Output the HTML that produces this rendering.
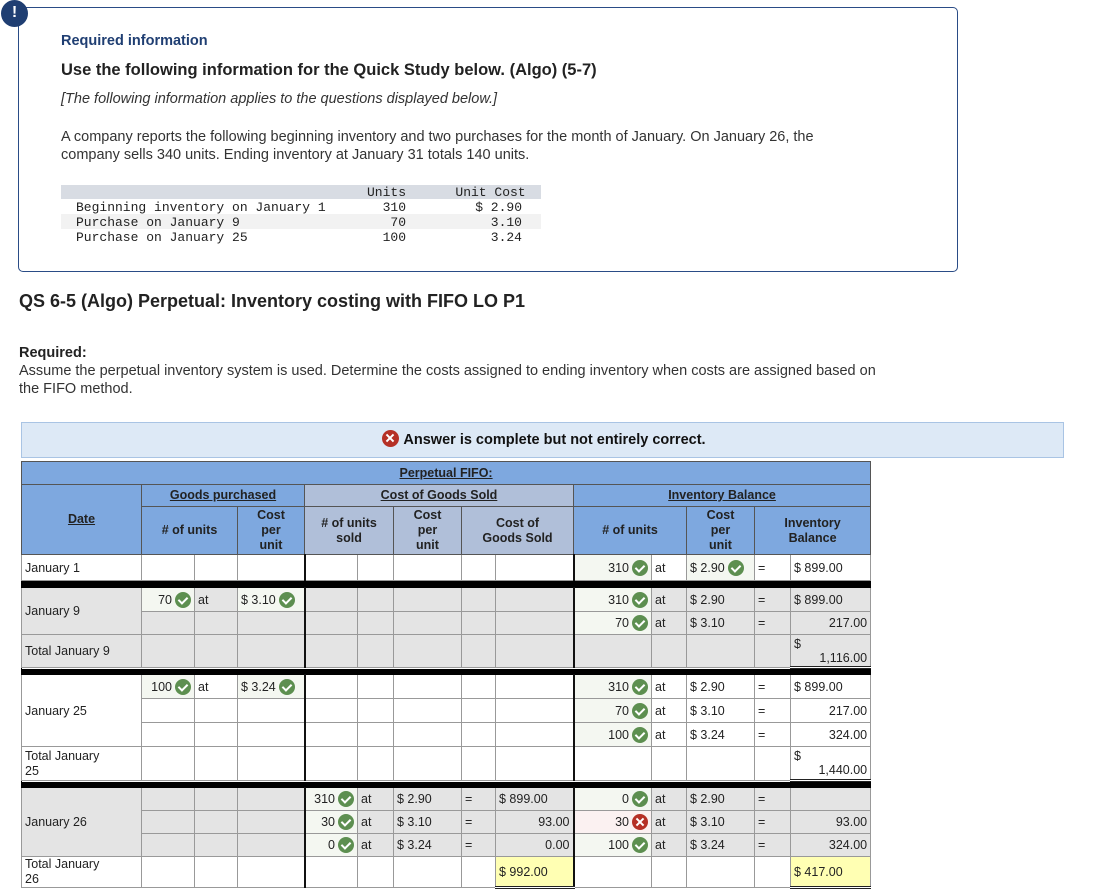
<!DOCTYPE html>
<html><head><meta charset="utf-8">
<style>
*{box-sizing:border-box;margin:0;padding:0}
body{width:1118px;height:890px;background:#fff;font-family:"Liberation Sans",Arial,sans-serif;color:#222;position:relative;overflow:hidden}
.abs{position:absolute}
.box{left:18px;top:7px;width:940px;height:265px;border:1px solid #2a4c86;border-radius:5px}
.excl{left:1px;top:0px;width:27px;height:27px;border-radius:50%;background:#1f3e72;color:#fff;font-weight:bold;font-size:16px;text-align:center;line-height:26px}
.mono{font-family:"Liberation Mono","DejaVu Sans Mono",monospace;font-size:13px;line-height:15px;color:#222;white-space:pre}
table.t{position:absolute;left:21px;top:461px;border-collapse:collapse;table-layout:fixed;width:849px;font-size:12.5px}
table.t td{border:1px solid #999;padding:0 3px;overflow:hidden;white-space:nowrap;vertical-align:middle}
.h1{background:#7ea8df;border-color:#555 !important;font-weight:bold;text-align:center;color:#222;white-space:normal !important;line-height:15px}
.h2{background:#b0bfd9;border-color:#555 !important;font-weight:bold;text-align:center;white-space:normal !important;line-height:15px}
u{text-decoration:underline}
.bar td{background:#000;border-color:#000 !important;height:7px;padding:0}
.g td{background:#e4e4e4}
.in{background:#f4f7f1 !important}
.inr{background:#fbf1f1 !important}
.r{text-align:right}
.y{background:#ffffb3 !important}
.L{border-left:2px solid #111 !important}
.G{border-left:1px solid #333 !important}
.ic{display:inline-block;width:16px;height:16px;border-radius:50%;vertical-align:-4px;margin-left:3px}
.ok{background:#5d8f50}
.no{background:#b53026}
.tw{white-space:normal !important;line-height:15px}
</style></head><body>
<div class="abs box"></div>
<div class="abs excl">!</div>
<div class="abs" style="left:61px;top:33px;font-size:14.5px;font-weight:bold;color:#1f3e72">Required information</div>
<div class="abs" style="left:61px;top:61px;font-size:16.5px;font-weight:bold;color:#222">Use the following information for the Quick Study below. (Algo) (5-7)</div>
<div class="abs" style="left:61px;top:91px;font-size:14.5px;font-style:italic;color:#333">[The following information applies to the questions displayed below.]</div>
<div class="abs" style="left:61px;top:128px;font-size:14.5px;line-height:18px;color:#333;width:805px">A company reports the following beginning inventory and two purchases for the month of January. On January 26, the company sells 340 units. Ending inventory at January 31 totals 140 units.</div>
<div class="abs" style="left:61px;top:185px;width:480px;height:14px;background:#d8dce3"></div>
<div class="abs" style="left:61px;top:214px;width:480px;height:15px;background:#f2f2f2"></div>
<div class="abs mono" style="left:76px;top:200px">Beginning inventory on January 1
Purchase on January 9
Purchase on January 25</div>
<div class="abs mono" style="left:360px;top:185px;width:46px;text-align:right">Units
310
70
100</div>
<div class="abs mono" style="left:440px;top:185px;width:101px;text-align:center">Unit Cost</div>
<div class="abs mono" style="left:440px;top:200px;width:82px;text-align:right">$ 2.90
3.10
3.24</div>

<div class="abs" style="left:19px;top:291px;font-size:18px;font-weight:bold;color:#222">QS 6-5 (Algo) Perpetual: Inventory costing with FIFO LO P1</div>
<div class="abs" style="left:19px;top:345px;font-size:14.5px;font-weight:bold;color:#222">Required:</div>
<div class="abs" style="left:19px;top:362px;font-size:14.5px;line-height:18px;color:#333;width:878px">Assume the perpetual inventory system is used. Determine the costs assigned to ending inventory when costs are assigned based on the FIFO method.</div>

<div class="abs" style="left:21px;top:422px;width:1043px;height:36px;background:#dde9f6;border:1px solid #a9c4e4;text-align:center;font-weight:bold;font-size:14.5px;line-height:34px;color:#111"><span class="ic no" style="width:17px;height:17px;vertical-align:-3px;margin-right:4px"></span>Answer is complete but not entirely correct.</div>

<table class="t">
<colgroup><col style="width:120px"><col style="width:53px"><col style="width:43px"><col style="width:67px"><col style="width:53px"><col style="width:36px"><col style="width:68px"><col style="width:34px"><col style="width:78px"><col style="width:78px"><col style="width:35px"><col style="width:68px"><col style="width:36px"><col style="width:80px"></colgroup>
<tr style="height:23px"><td colspan="14" class="h1"><u>Perpetual FIFO:</u></td></tr>
<tr style="height:22px"><td rowspan="2" class="h1"><u>Date</u></td><td colspan="3" class="h1"><u>Goods purchased</u></td><td colspan="5" class="h2"><u>Cost of Goods Sold</u></td><td colspan="5" class="h1"><u>Inventory Balance</u></td></tr>
<tr style="height:48px"><td colspan="2" class="h1"># of units</td><td class="h1">Cost<br>per<br>unit</td><td colspan="2" class="h2"># of units<br>sold</td><td class="h2">Cost<br>per<br>unit</td><td colspan="2" class="h2">Cost of<br>Goods Sold</td><td colspan="2" class="h1"># of units</td><td class="h1">Cost<br>per<br>unit</td><td colspan="2" class="h1">Inventory<br>Balance</td></tr>

<tr style="height:26px"><td>January 1</td><td class="G"></td><td></td><td></td><td class="L"></td><td></td><td></td><td></td><td></td><td class="r in L">310<span class="ic ok"></span></td><td>at</td><td class="in">$ 2.90<span class="ic ok"></span></td><td>=</td><td>$ 899.00</td></tr>
<tr class="bar"><td colspan="14"></td></tr>

<tr class="g" style="height:24px"><td rowspan="2">January 9</td><td class="r in G">70<span class="ic ok"></span></td><td>at</td><td class="in">$ 3.10<span class="ic ok"></span></td><td class="L"></td><td></td><td></td><td></td><td></td><td class="r in L">310<span class="ic ok"></span></td><td>at</td><td>$ 2.90</td><td>=</td><td>$ 899.00</td></tr>
<tr class="g" style="height:23px"><td class="G"></td><td></td><td></td><td class="L"></td><td></td><td></td><td></td><td></td><td class="r in L">70<span class="ic ok"></span></td><td>at</td><td>$ 3.10</td><td>=</td><td class="r">217.00</td></tr>
<tr class="g" style="height:33px"><td>Total January 9</td><td class="G"></td><td></td><td></td><td class="L"></td><td></td><td></td><td></td><td></td><td class="L"></td><td></td><td></td><td></td><td style="line-height:14px;border-bottom:3px double #222">$<br><span style="float:right">1,116.00</span></td></tr>
<tr class="bar"><td colspan="14"></td></tr>

<tr style="height:24px"><td rowspan="3">January 25</td><td class="r in G">100<span class="ic ok"></span></td><td>at</td><td class="in">$ 3.24<span class="ic ok"></span></td><td class="L"></td><td></td><td></td><td></td><td></td><td class="r in L">310<span class="ic ok"></span></td><td>at</td><td>$ 2.90</td><td>=</td><td>$ 899.00</td></tr>
<tr style="height:24px"><td class="G"></td><td></td><td></td><td class="L"></td><td></td><td></td><td></td><td></td><td class="r in L">70<span class="ic ok"></span></td><td>at</td><td>$ 3.10</td><td>=</td><td class="r">217.00</td></tr>
<tr style="height:24px"><td class="G"></td><td></td><td></td><td class="L"></td><td></td><td></td><td></td><td></td><td class="r in L">100<span class="ic ok"></span></td><td>at</td><td>$ 3.24</td><td>=</td><td class="r">324.00</td></tr>
<tr style="height:34px"><td class="tw">Total January<br>25</td><td class="G"></td><td></td><td></td><td class="L"></td><td></td><td></td><td></td><td></td><td class="L"></td><td></td><td></td><td></td><td style="line-height:14px;border-bottom:3px double #222">$<br><span style="float:right">1,440.00</span></td></tr>
<tr class="bar"><td colspan="14"></td></tr>

<tr class="g" style="height:23px"><td rowspan="3">January 26</td><td class="G"></td><td></td><td></td><td class="r in L">310<span class="ic ok"></span></td><td>at</td><td>$ 2.90</td><td>=</td><td>$ 899.00</td><td class="r in L">0<span class="ic ok"></span></td><td>at</td><td>$ 2.90</td><td>=</td><td></td></tr>
<tr class="g" style="height:23px"><td class="G"></td><td></td><td></td><td class="r in L">30<span class="ic ok"></span></td><td>at</td><td>$ 3.10</td><td>=</td><td class="r">93.00</td><td class="r inr L">30<span class="ic no"></span></td><td>at</td><td>$ 3.10</td><td>=</td><td class="r">93.00</td></tr>
<tr class="g" style="height:23px"><td class="G"></td><td></td><td></td><td class="r in L">0<span class="ic ok"></span></td><td>at</td><td>$ 3.24</td><td>=</td><td class="r">0.00</td><td class="r in L">100<span class="ic ok"></span></td><td>at</td><td>$ 3.24</td><td>=</td><td class="r">324.00</td></tr>
<tr style="height:30px"><td class="tw">Total January<br>26</td><td class="G"></td><td></td><td></td><td class="L"></td><td></td><td></td><td></td><td class="y" style="border-bottom:3px double #222">$ 992.00</td><td class="L"></td><td></td><td></td><td></td><td class="y" style="border-bottom:3px double #222">$ 417.00</td></tr>
</table>
<style>
.ic.ok{position:relative}
.ic.ok::after{content:"";position:absolute;left:5px;top:3px;width:4px;height:7px;border:solid #fff;border-width:0 2px 2px 0;transform:rotate(45deg)}
.ic.no{position:relative}
.ic.no::before,.ic.no::after{content:"";position:absolute;left:7px;top:3px;width:2px;height:10px;background:#fff;transform:rotate(45deg)}
.ic.no::after{transform:rotate(-45deg)}
</style>
</body></html>
